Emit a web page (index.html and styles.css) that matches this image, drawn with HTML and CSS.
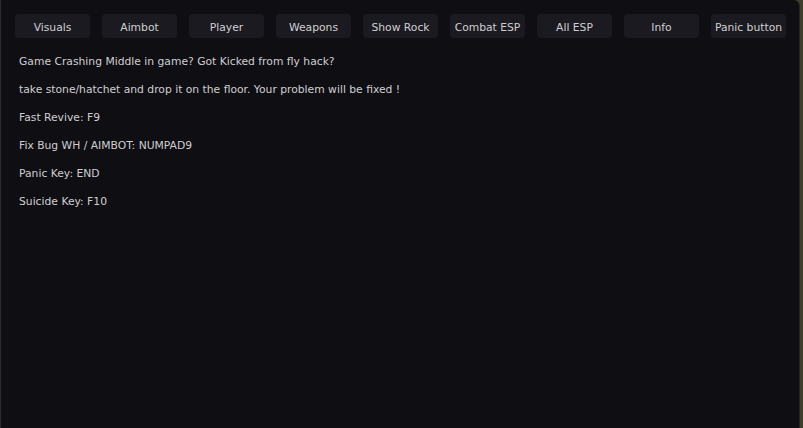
FILE: index.html
```html
<!DOCTYPE html>
<html lang="en">
<head>
  <meta charset="UTF-8" />
  <title>Menu</title>
  <link rel="stylesheet" href="styles.css">
</head>
<body>
  <div class="window">
    <nav class="tabs">
      <button class="tab">Visuals</button>
      <button class="tab">Aimbot</button>
      <button class="tab">Player</button>
      <button class="tab">Weapons</button>
      <button class="tab">Show Rock</button>
      <button class="tab">Combat ESP</button>
      <button class="tab">All ESP</button>
      <button class="tab">Info</button>
      <button class="tab">Panic button</button>
    </nav>
    <div class="info">
      <p>Game Crashing Middle in game? Got Kicked from fly hack?</p>
      <p>take stone/hatchet and drop it on the floor. Your problem will be fixed !</p>
      <p>Fast Revive: F9</p>
      <p>Fix Bug WH / AIMBOT: NUMPAD9</p>
      <p>Panic Key: END</p>
      <p>Suicide Key: F10</p>
    </div>
  </div>
</body>
</html>
```

FILE: styles.css
```css
:root {
  --bg: #0f0e13;
  --btn: #1b1a20;
  --text: #cfcfd2;
  --edge: #2c2b33;
}

body {
  margin: 0;
  height: 428px;
  overflow: hidden;
  background: #3f3d2b;
  font-family: "DejaVu Sans", Verdana, sans-serif;
  font-size: 10.75px;
  color: var(--text);
}

.window {
  box-sizing: border-box;
  width: 800px;
  height: 428px;
  background: var(--bg);
  border-left: 1px solid var(--edge);
  border-right: 1px solid #24232a;
  border-top-right-radius: 6px;
  padding: 14px 0 0 14px;
}

.tabs {
  display: flex;
  gap: 12px;
}

.tab {
  width: 75px;
  height: 24px;
  padding: 2px 0 0;
  border: none;
  border-radius: 4px;
  background: var(--btn);
  color: var(--text);
  font: inherit;
}

.info {
  margin-top: 10px;
  padding-left: 4px;
}

.info p {
  margin: 0;
  line-height: 28px;
}
```
